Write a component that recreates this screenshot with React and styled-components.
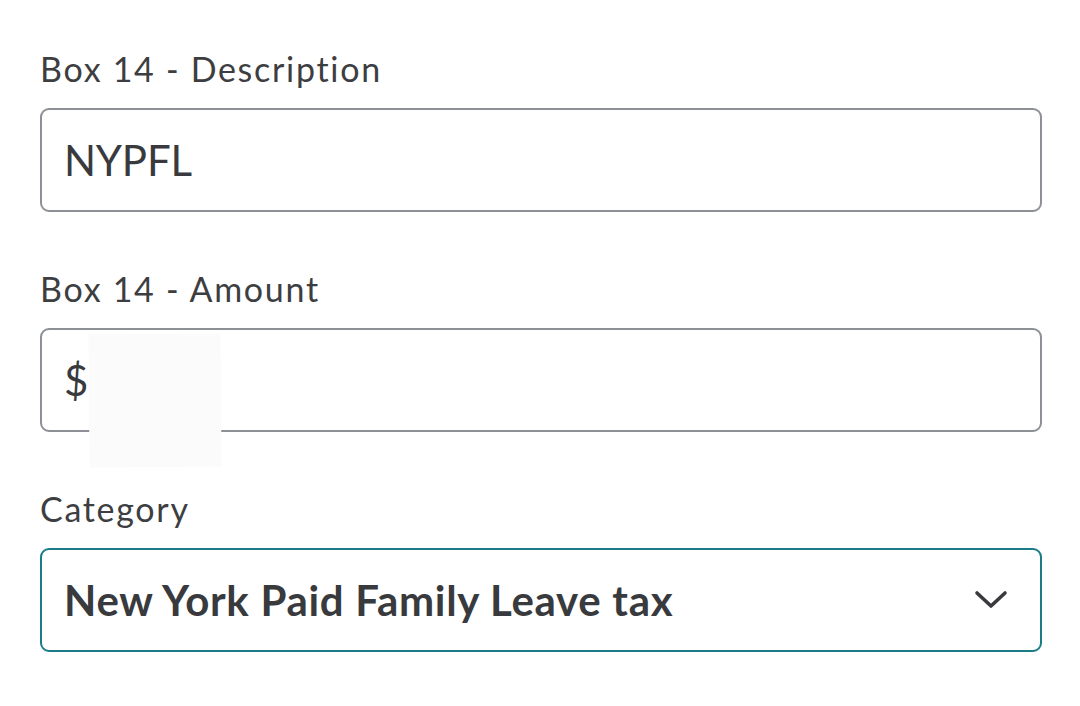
import React from 'react';
import styled, { createGlobalStyle } from 'styled-components';

const GlobalStyle = createGlobalStyle`
  html, body {
    margin: 0;
    padding: 0;
    background: #ffffff;
  }
  body {
    font-family: Lato, "Open Sans", sans-serif;
    color: #393a3d;
  }
`;

const fields = [
  { label: 'Box 14 - Description', value: 'NYPFL' },
  { label: 'Box 14 - Amount', value: '$', redacted: true },
];

const App = () => {
  return (
    <>
      <GlobalStyle />
      <Form>
        {fields.map(f => (
          <Field key={f.label}>
            <Label>{f.label}</Label>
            <InputBox>
              <Value>{f.value}</Value>
              {f.redacted && <Redaction />}
            </InputBox>
          </Field>
        ))}
        <Field>
          <Label>Category</Label>
          <SelectBox>
            <SelectValue>New York Paid Family Leave tax</SelectValue>
            <Chevron width="34" height="20" viewBox="0 0 34 20">
              <path d="M3 3 L17 16 L31 3" fill="none" stroke="#393a3d" strokeWidth="3.6" strokeLinecap="round" strokeLinejoin="round" />
            </Chevron>
          </SelectBox>
        </Field>
      </Form>
    </>
  );
};

export default App;

// Styled Components

const Form = styled.div`
  display: flex;
  flex-direction: column;
  gap: 57px;
  padding: 49px 38px 0 40px;
`;

const Field = styled.div`
  display: flex;
  flex-direction: column;
  gap: 19px;
`;

const Label = styled.div`
  font-size: 34px;
  line-height: 40px;
  color: #3d3e41;
  letter-spacing: 1.7px;
`;

const InputBox = styled.div`
  position: relative;
  box-sizing: border-box;
  height: 104px;
  display: flex;
  align-items: center;
  padding: 0 22px;
  border: 2px solid #8d9096;
  border-radius: 9px;
  background: #ffffff;
`;

const Value = styled.span`
  font-size: 42px;
  color: #393a3d;
  letter-spacing: -0.2px;
`;

const Redaction = styled.div`
  position: absolute;
  left: 47px;
  top: 4px;
  width: 132px;
  height: 133px;
  background: #fbfbfb;
  transform: rotate(-0.5deg);
`;

const SelectBox = styled(InputBox)`
  justify-content: space-between;
  padding-right: 32px;
  border-color: #1b7b86;
`;

const SelectValue = styled.span`
  font-size: 42px;
  font-weight: 700;
  color: #393a3d;
  letter-spacing: 0.7px;
`;

const Chevron = styled.svg`
  display: block;
`;
